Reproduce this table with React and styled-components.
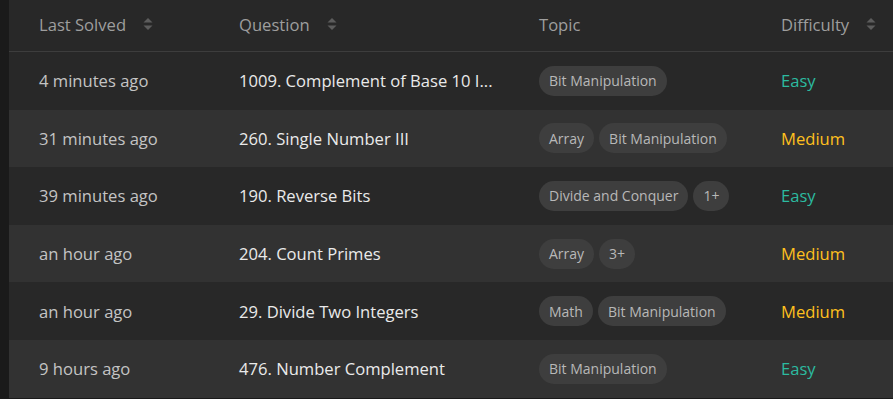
import styled, { createGlobalStyle } from "styled-components";

const GlobalStyle = createGlobalStyle`
  html, body {
    margin: 0;
    padding: 0;
    background: #1a1a1a;
  }
  body {
    font-family: "Open Sans", "Noto Sans", sans-serif;
  }
`;

const rows = [
  { time: "4 minutes ago", title: "1009. Complement of Base 10 I...", tags: ["Bit Manipulation"], level: "Easy" },
  { time: "31 minutes ago", title: "260. Single Number III", tags: ["Array", "Bit Manipulation"], level: "Medium" },
  { time: "39 minutes ago", title: "190. Reverse Bits", tags: ["Divide and Conquer", "1+"], level: "Easy" },
  { time: "an hour ago", title: "204. Count Primes", tags: ["Array", "3+"], level: "Medium" },
  { time: "an hour ago", title: "29. Divide Two Integers", tags: ["Math", "Bit Manipulation"], level: "Medium" },
  { time: "9 hours ago", title: "476. Number Complement", tags: ["Bit Manipulation"], level: "Easy" },
];

const levelColors = {
  Easy: "#2cbba0",
  Medium: "#ffc01e",
  Hard: "#ff375f",
};

const Page = styled.div`
  height: 399px;
  padding-left: 9px;
  background: #1a1a1a;
  overflow: hidden;
`;

const Table = styled.div`
  background: #282828;
  height: 397px;
`;

const Row = styled.div`
  display: grid;
  grid-template-columns: 200px 300px 242px 1fr;
  align-items: center;
  height: ${(p) => (p.$head ? "51px" : "57.6px")};
  background: ${(p) => (p.$striped ? "#323232" : "#282828")};
  border-bottom: ${(p) => (p.$head ? "1px solid #3d3d3d" : "none")};
`;

const HeadCell = styled.div`
  display: flex;
  align-items: center;
  gap: 17px;
  padding-left: 30px;
  padding-bottom: 3px;
  font-size: 16.6px;
  color: #9e9e9e;
  white-space: nowrap;
`;

const Cell = styled.div`
  padding-left: 30px;
  font-size: 16.6px;
  color: ${(p) => p.$color || "#c4c4c4"};
  white-space: nowrap;
  display: flex;
  align-items: center;
  gap: 5px;
`;

const Tag = styled.span`
  display: inline-flex;
  align-items: center;
  height: 30px;
  padding: 0 10px;
  border-radius: 15px;
  background: #3e3e3e;
  color: #b8b8b8;
  font-size: 14px;
`;

const SortIcon = () => (
  <svg width="10" height="14" viewBox="0 0 10 14">
    <path d="M5 1 L9.5 5.5 H0.5 Z" fill="#5c5c5c" />
    <path d="M5 13 L9.5 8.5 H0.5 Z" fill="#5c5c5c" />
  </svg>
);

export default function App() {
  return (
    <>
      <GlobalStyle />
      <Page>
        <Table>
          <Row $head>
            <HeadCell>
              Last Solved <SortIcon />
            </HeadCell>
            <HeadCell>
              Question <SortIcon />
            </HeadCell>
            <HeadCell>Topic</HeadCell>
            <HeadCell>
              Difficulty <SortIcon />
            </HeadCell>
          </Row>
          {rows.map((r, i) => (
            <Row key={i} $striped={i % 2 === 1}>
              <Cell>{r.time}</Cell>
              <Cell $color="#eaeaea">{r.title}</Cell>
              <Cell>
                {r.tags.map((t) => (
                  <Tag key={t}>{t}</Tag>
                ))}
              </Cell>
              <Cell $color={levelColors[r.level]}>{r.level}</Cell>
            </Row>
          ))}
        </Table>
      </Page>
    </>
  );
}
